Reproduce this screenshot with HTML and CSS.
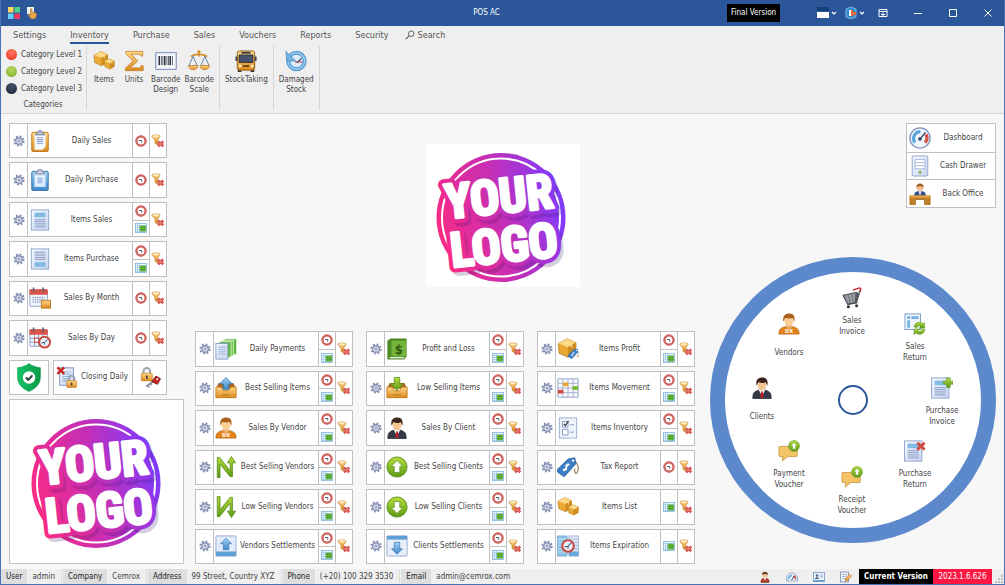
FILE: index.html
```html
<!DOCTYPE html>
<html lang="en">
<head>
<meta charset="UTF-8" />
<meta name="viewport" content="width=device-width, initial-scale=1" />
<title>POS AC</title>
<link rel="stylesheet" href="styles.css">
</head>
<body>

<!-- icon sprite -->
<svg class="sprite" aria-hidden="true">
  <defs>
    <linearGradient id="gOrange" x1="0" y1="0" x2="0" y2="1"><stop offset="0" stop-color="#ffd98a"/><stop offset="1" stop-color="#dd8a1e"/></linearGradient>
    <linearGradient id="gBlue" x1="0" y1="0" x2="0" y2="1"><stop offset="0" stop-color="#9fd3f5"/><stop offset="1" stop-color="#3f87c9"/></linearGradient>
    <linearGradient id="gGreen" x1="0" y1="0" x2="0" y2="1"><stop offset="0" stop-color="#b5dc3c"/><stop offset="1" stop-color="#5c9a16"/></linearGradient>
    <linearGradient id="gPaper" x1="0" y1="0" x2="1" y2="1"><stop offset="0" stop-color="#f4f8ff"/><stop offset="1" stop-color="#c9d6f0"/></linearGradient>
    <linearGradient id="gShield" x1="0" y1="0" x2="1" y2="0"><stop offset="0" stop-color="#17c367"/><stop offset="1" stop-color="#0b9a49"/></linearGradient>
    <linearGradient id="gLogo" gradientUnits="userSpaceOnUse" x1="10" y1="90" x2="140" y2="60"><stop offset="0" stop-color="#fb2a83"/><stop offset=".5" stop-color="#c62fb4"/><stop offset="1" stop-color="#7d3bff"/></linearGradient>
  </defs>

  <symbol id="gear" viewBox="0 0 24 24">
    <circle cx="12" cy="12" r="9.600" fill="none" stroke="#7d89ab" stroke-width="3.200" stroke-dasharray="3.800 3.740"/>
    <circle cx="12" cy="12" r="6.600" fill="#e6ebf6" stroke="#8490b3" stroke-width="2.800"/>
    <circle cx="12" cy="12" r="2.200" fill="#fff" stroke="#66739a" stroke-width="1.600"/>
  </symbol>
  <symbol id="clock" viewBox="0 0 24 24">
    <circle cx="12" cy="12" r="9.200" fill="#fff" stroke="#c8524c" stroke-width="4.400"/>
    <circle cx="12" cy="12" r="10" fill="none" stroke="#e38a84" stroke-width="1"/>
    <path d="M8 11h5.500v4.500" fill="none" stroke="#6b5a6c" stroke-width="2"/>
  </symbol>
  <symbol id="sheet" viewBox="0 0 24 20">
    <rect x="1" y="1" width="22" height="18" fill="#f2f9fe" stroke="#7fb3dc" stroke-width="1.600"/>
    <rect x="9" y="5" width="13" height="12" fill="#6cc02b"/>
    <path d="M1 5h22M1 9h22M1 13h22M1 17h22M5 1v18M9 1v18" stroke="#84b9df" stroke-width="1"/>
    <path d="M9 9h13M9 13h13M13.500 5v12M18 5v12" stroke="#3f8d15" stroke-width="1"/>
  </symbol>
  <symbol id="filter" viewBox="0 0 24 24">
    <path d="M1.500 4c0-3 14-3 14 0l-4.500 6.500v8l-4-2.500v-5.500z" fill="url(#gOrange)" stroke="#bf7b24" stroke-width="1.200"/>
    <ellipse cx="8.500" cy="4" rx="5.500" ry="1.700" fill="#fff0c8"/>
    <path d="M12 13l9 8M21 13l-9 8" stroke="#d0453f" stroke-width="4.500"/>
    <path d="M13 14l7 6M20 14l-7 6" stroke="#f0938c" stroke-width="1.500"/>
  </symbol>
  <symbol id="clip-orange" viewBox="0 0 24 24">
    <rect x="3" y="2.500" width="18" height="21" rx="1.500" fill="url(#gOrange)" stroke="#b87418"/>
    <path d="M6 4.500h12v13.500l-3 3.500h-9z" fill="#f4f7fc"/>
    <path d="M8.500 8.500h7M8.500 10.500h7M8.500 12.500h7M8.500 14.500h7" stroke="#9db2d8" stroke-width="1.300"/>
    <path d="M7 5.500c0-3 3-2 3-3.500a2 2 0 0 1 4 0c0 1.500 3 .5 3 3.500z" fill="#aab6cf" stroke="#6c7a9b" stroke-width=".8"/>
  </symbol>
  <symbol id="clip-blue" viewBox="0 0 24 24">
    <rect x="3" y="2.500" width="18" height="21" rx="1.500" fill="url(#gBlue)" stroke="#3671a8"/>
    <path d="M6 5h12v14.500H6z" fill="#dceafa"/>
    <path d="M8.500 8.500h7v6l-2 2h-5z" fill="#a5c5ea" stroke="#fff"/>
    <path d="M7 5.500c0-3 3-2 3-3.500a2 2 0 0 1 4 0c0 1.500 3 .5 3 3.500z" fill="#c2cbdc" stroke="#6c7a9b" stroke-width=".8"/>
  </symbol>
  <symbol id="doc-top" viewBox="0 0 24 24">
    <rect x="2.500" y="1" width="19" height="22" fill="url(#gPaper)" stroke="#8fa2cc"/>
    <rect x="6" y="4" width="12" height="5" fill="#7fbbe4"/>
    <path d="M6 11.500h12M6 13.500h12M6 15.500h12M6 17.500h12M6 19.500h12" stroke="#98a8d0" stroke-width="1.100"/>
  </symbol>
  <symbol id="doc-bottom" viewBox="0 0 24 24">
    <rect x="2.500" y="1" width="19" height="22" fill="url(#gPaper)" stroke="#8fa2cc"/>
    <rect x="6" y="15.500" width="12" height="5" fill="#7fbbe4"/>
    <path d="M6 4.500h12M6 6.500h12M6 8.500h12M6 10.500h12M6 12.500h12" stroke="#98a8d0" stroke-width="1.100"/>
  </symbol>
  <symbol id="calendar" viewBox="0 0 24 24">
    <rect x="1" y="3" width="19" height="18" rx="1" fill="#f2f6fd" stroke="#8b9cc6"/>
    <path d="M.5 8.500v-5q0-1 1-1h18q1 0 1 1v5z" fill="#d9554b"/>
    <path d="M5 .5v4.500M15.500 .5v4.500" stroke="#5d6273" stroke-width="1.800"/>
    <path d="M4 11.500h13M4 14h13M4 16.500h13" stroke="#8498c8" stroke-width="1.500" stroke-dasharray="1.500 .9"/>
  </symbol>
  <symbol id="cal-box" viewBox="0 0 24 24">
    <use href="#calendar" width="24" height="24"/>
    <rect x="13.500" y="14.500" width="10" height="8.500" fill="url(#gOrange)" stroke="#bd7b1c"/>
  </symbol>
  <symbol id="red-clock" viewBox="0 0 24 24">
    <circle cx="12" cy="12" r="9.500" fill="#e9f2fb" stroke="#c74a43" stroke-width="3.400"/>
    <path d="M6 13.500l6-1 5-5.500M12 12.500v4" fill="none" stroke="#44516e" stroke-width="1.700"/>
  </symbol>
  <symbol id="cal-clock" viewBox="0 0 24 24">
    <rect x="1" y="3" width="19" height="18" rx="1" fill="#f2f6fd" stroke="#8b9cc6"/>
    <path d="M1 12.500h19M1 16.500h19M6 8v13M10.500 8v13M15 8v13" stroke="#8498c8"/>
    <path d="M.5 8.500v-5q0-1 1-1h18q1 0 1 1v5z" fill="#d9554b"/>
    <path d="M5 .5v4.500M15.500 .5v4.500" stroke="#5d6273" stroke-width="1.800"/>
    <rect x="6" y="12" width="5" height="5" fill="none" stroke="#d9554b"/>
    <use href="#red-clock" x="9.500" y="9" width="15" height="15"/>
  </symbol>
  <symbol id="shield" viewBox="0 0 24 28">
    <path d="M12 .5c3 2.500 6.500 3.500 11 4v9c0 7-4.500 11-11 14-6.500-3-11-7-11-14v-9c4.500-.5 8-1.500 11-4z" fill="url(#gShield)" stroke="#0d9a4a" stroke-width=".6"/>
    <circle cx="12" cy="14" r="6" fill="#fff"/>
    <path d="M9 14l2.300 2.300 4-4.300" fill="none" stroke="#1d3b2b" stroke-width="1.800"/>
  </symbol>
  <symbol id="padlock" viewBox="0 0 24 24">
    <path d="M7 12V8a5 5 0 0 1 10 0v4" fill="none" stroke="#9aa2b1" stroke-width="3"/>
    <rect x="3.500" y="11" width="17" height="12" rx="1.500" fill="url(#gOrange)" stroke="#b87418"/>
    <path d="M12 14.500v5" stroke="#3c3c48" stroke-width="2.600"/>
  </symbol>
  <symbol id="doc-lock" viewBox="0 0 24 24">
    <rect x="4" y="2" width="15" height="19" fill="url(#gPaper)" stroke="#7693be"/>
    <path d="M7 6.500h9M7 9h9M7 11.500h9M7 14h9M7 16.500h9" stroke="#98b4dc" stroke-width="1.200"/>
    <path d="M1.500 1.500l7.500 7M9 1.500l-7.500 7" stroke="#c9221b" stroke-width="2.600"/>
    <use href="#padlock" x="9.500" y="9" width="15" height="15"/>
  </symbol>
  <symbol id="lock-key" viewBox="0 0 24 24">
    <use href="#padlock" x="0" y="0" width="17" height="17"/>
    <path d="M16 16l-8 6.500" stroke="#8c94a6" stroke-width="2.200"/>
    <path d="M9.500 21l2 2.500M12.500 19l1.500 2" stroke="#8c94a6" stroke-width="1.500"/>
    <path d="M18.500 11l5 3-3.500 6-6-3z" fill="#c52425" stroke="#851617"/>
    <circle cx="20" cy="14.500" r="1.100" fill="#fff"/>
  </symbol>
  <symbol id="pages" viewBox="0 0 24 24">
    <path d="M10.500 1h13v17h-13z" fill="#4fae34" stroke="#fff" stroke-width=".7"/>
    <path d="M7.500 2.500h13v17h-13z" fill="#7cc957" stroke="#fff" stroke-width=".7"/>
    <path d="M4.500 4h13v17h-13z" fill="#5db73e" stroke="#fff" stroke-width=".7"/>
    <rect x="1" y="6" width="13" height="17" fill="url(#gPaper)" stroke="#7f9cc6"/>
    <path d="M3.500 10h8M3.500 12.500h8M3.500 15h8M3.500 17.500h8" stroke="#9db5dc" stroke-width="1.200"/>
  </symbol>
  <symbol id="tray" viewBox="0 0 24 24">
    <path d="M4 6.500h16l3 6H1z" fill="#a96522"/>
    <path d="M1 11h6l2 4h6l2-4h6v11.500H1z" fill="url(#gOrange)" stroke="#c57c1d"/>
    <path d="M8 19.500h8" stroke="#b87418"/>
  </symbol>
  <symbol id="tray-up" viewBox="0 0 24 24">
    <use href="#tray" width="24" height="24"/>
    <path d="M12 .5l7 7h-4v6H9v-6H5z" fill="url(#gBlue)" stroke="#3671a8" stroke-width=".8"/>
  </symbol>
  <symbol id="tray-down" viewBox="0 0 24 24">
    <use href="#tray" width="24" height="24"/>
    <path d="M12 14.500l7-7h-4V.5H9v7H5z" fill="url(#gGreen)" stroke="#4f8a12" stroke-width=".8"/>
  </symbol>
  <symbol id="vendor" viewBox="0 0 24 24">
    <path d="M1 23c0-5 2-7 7-8h8c5 1 7 3 7 8z" fill="#e58216" stroke="#b9620c" stroke-width=".8"/>
    <path d="M9 12h6v4l-3 2-3-2z" fill="#e3ab6c"/>
    <ellipse cx="12" cy="8.500" rx="5" ry="6" fill="#f7cf97"/>
    <path d="M6 9.500C4.500 3 8 .5 12.500 .5S19 4 17.800 9.500l-1.600-4c-3 .8-6 .5-8.400 0z" fill="#a9611d"/>
  </symbol>
  <symbol id="client" viewBox="0 0 24 24">
    <path d="M2 23.500c0-5.500 1-7.500 6-9h8c5 1.500 6 3.500 6 9z" fill="#363a48" stroke="#22242e" stroke-width=".8"/>
    <path d="M8.500 14l3.500 7 3.500-7z" fill="#fff"/>
    <path d="M11.200 15.500h1.600l1 7h-3.600z" fill="#c32026"/>
    <ellipse cx="12" cy="8.500" rx="4.800" ry="6" fill="#f3c692"/>
    <path d="M6.200 9.500C4.500 3 8 .5 12.500 .5S19 4 17.800 9.500l-1.800-4c-1.500 1.500-5 1.500-8 0z" fill="#3a241b"/>
  </symbol>
  <symbol id="n-up" viewBox="0 0 24 24">
    <path d="M2.500 23.500V1.500h2.500L16.500 16V7.500h-3l4.500-7 4.500 7H19V22.500h-2.500L5.500 9v14.500z" fill="url(#gGreen)" stroke="#4d8612" stroke-width=".8"/>
  </symbol>
  <symbol id="n-down" viewBox="0 0 24 24">
    <path d="M2.500 .5v22h2.500L16.500 8v8.500h-3l4.500 7 4.500-7H19V1.500h-2.500L5.500 15V.5z" fill="url(#gGreen)" stroke="#4d8612" stroke-width=".8"/>
  </symbol>
  <symbol id="settle-up" viewBox="0 0 24 24">
    <rect x="1" y="1" width="22" height="22" rx="1" fill="#e1eaf9" stroke="#93a7d0"/>
    <path d="M1 18h22v5H1z" fill="#5e9fd8"/>
    <path d="M12 3.500l6 6h-3v6.500H9V9.500H6z" fill="url(#gBlue)" stroke="#3b78b5" stroke-width=".8"/>
  </symbol>
  <symbol id="settle-down" viewBox="0 0 24 24">
    <rect x="1" y="1" width="22" height="22" rx="1" fill="#e9effa" stroke="#93a7d0"/>
    <path d="M1 1h22v4H1z" fill="#5e9fd8"/>
    <path d="M12 21l6-6h-3V8H9v7H6z" fill="url(#gBlue)" stroke="#3b78b5" stroke-width=".8"/>
  </symbol>
  <symbol id="book" viewBox="0 0 24 24">
    <path d="M2 3l3-2h17v19l-2 3H2z" fill="#4f8e26" stroke="#3d7419" stroke-width=".8"/>
    <path d="M6 3h16v17H6z" fill="#74b43c"/>
    <path d="M4 21.500h16" stroke="#e8efdc" stroke-width="1.500"/>
  </symbol>
  <symbol id="circle-up" viewBox="0 0 24 24">
    <circle cx="12" cy="12" r="11" fill="url(#gGreen)" stroke="#568f17"/>
    <path d="M12 5l6.500 6.500H15V18H9v-6.500H5.500z" fill="#fff" stroke="#5c9420" stroke-width=".8"/>
  </symbol>
  <symbol id="circle-down" viewBox="0 0 24 24">
    <circle cx="12" cy="12" r="11" fill="url(#gGreen)" stroke="#568f17"/>
    <path d="M12 19l6.500-6.500H15V6H9v6.500H5.500z" fill="#fff" stroke="#5c9420" stroke-width=".8"/>
  </symbol>
  <symbol id="box" viewBox="0 0 24 24">
    <path d="M1.500 6.500L12 1l10.500 4.500v12L13 23 2.500 18z" fill="#eaa834" stroke="#a66d14" stroke-width=".8"/>
    <path d="M1.500 6.500L12 1l10.500 4.500L13 11z" fill="#fbd67e"/>
    <path d="M13 11l9.500-5.500v12L13 23z" fill="#cf8b1e"/>
    <path d="M7 4l10.500 4.500v3.500" fill="none" stroke="#fbe7b4" stroke-width="1.200"/>
  </symbol>
  <symbol id="tag" viewBox="0 0 24 24">
    <path d="M18 5c5 2 6 8 4.500 12s-4 1-3-3" fill="none" stroke="#a88763" stroke-width="1.400"/>
    <path d="M.5 14.500L12.500 3l7-1 1 6.500L9 21.500q-1.500 1.500-3 0L.5 17.500q-1-1.500 0-3z" fill="#3d7ec6" stroke="#235892" stroke-width=".8"/>
    <circle cx="17.500" cy="5" r="1.300" fill="#fff"/>
    <path d="M13.500 10c-2-3-5 0-3.500 2s0 5-3.500 2.500M13 8.500l-6 8" fill="none" stroke="#fff" stroke-width="1.300"/>
  </symbol>
  <symbol id="box-tag" viewBox="0 0 24 24">
    <use href="#box" width="22" height="22"/>
    <use href="#tag" x="12" y="11" width="12.500" height="12.500"/>
  </symbol>
  <symbol id="boxes" viewBox="0 0 24 24">
    <use href="#box" x="0" y="1" width="17" height="17"/>
    <use href="#box" x="11.500" y="9" width="12.500" height="12.500"/>
  </symbol>
  <symbol id="movement" viewBox="0 0 24 24">
    <rect x="1" y="2" width="22" height="20" fill="#f7f9fe" stroke="#8d9cc5"/>
    <path d="M1 7h22M1 12h22M1 17h22M6.500 2v20M12 2v20M17.500 2v20" stroke="#98a6cb" stroke-width=".9"/>
    <path d="M6.500 6h6v4h-6z" fill="#eda72e"/><path d="M17 10h6v4h-6z" fill="#76b82d"/><path d="M1 14h6v4H1z" fill="#d9473f"/>
  </symbol>
  <symbol id="checklist" viewBox="0 0 24 24">
    <rect x="2.500" y="1" width="19" height="22" fill="#eef3fc" stroke="#9aaad0"/>
    <path d="M6 5h6v6H6zM6 13.500h6v6H6z" fill="#fff" stroke="#8194c2"/>
    <path d="M7.500 7.500L9 9.500l3.500-5" fill="none" stroke="#343a4c" stroke-width="1.400"/>
    <path d="M14.500 8.500h4M14.500 16.500h4" stroke="#8194c2"/>
  </symbol>
  <symbol id="expire" viewBox="0 0 24 24">
    <path d="M.5 1h10.500v22H.5z" fill="#8cc4e6" stroke="#6aa5cf" stroke-width=".8"/><path d="M13 1h10.500v22H13z" fill="#d9e4f5" stroke="#8ea6d2" stroke-width=".8"/>
    <path d="M1 4.500h9.500M1 8h9.500M1 11.500h9.500M1 15h9.500M1 18.500h9.500" stroke="#d4ebf8" stroke-width=".8"/>
    <path d="M13.500 4.500h9.500M13.500 8h9.500M13.500 11.500h9.500M13.500 15h9.500" stroke="#9db2d9" stroke-width=".8"/>
    <path d="M13 18h10.500v5H13z" fill="#6ba9d9"/>
    <use href="#red-clock" x="4" y="4" width="16" height="16"/>
  </symbol>
  <symbol id="cart" viewBox="0 0 24 24">
    <path d="M2 9l14-3 4 1-3 10-10 2z" fill="#85888e" stroke="#46494f"/>
    <path d="M6 9l3 9M10 8l2 9.500M14 7.500l1 9" stroke="#b9bcc1" stroke-width=".7"/>
    <path d="M16 6l4 1-3 10-2-.5z" fill="#55585e"/>
    <path d="M19 8l2-5" stroke="#777" stroke-width="1.300"/>
    <path d="M13 3.500l7-2.500 1.500 .5-.5 4" fill="none" stroke="#c9252b" stroke-width="1.500"/>
    <path d="M7 19l11-2" stroke="#46494f" stroke-width="1.500"/>
    <circle cx="8" cy="21.500" r="1.700" fill="#333"/><circle cx="17" cy="20.500" r="1.700" fill="#333"/>
  </symbol>
  <symbol id="sales-return" viewBox="0 0 24 24">
    <rect x="1" y="1" width="17" height="17" fill="#edf4fc" stroke="#7d9bc9"/>
    <path d="M3.500 3.500h3v3h-3zM8 3.500h8v3H8zM3.500 8h3v8h-3z" fill="#72b1e0"/>
    <path d="M11 15c1-6 8-6 10-3l1.500-1.500v6h-6l2-2c-2-1.500-4-.5-4.500 1.500z" fill="url(#gGreen)" stroke="#568f17" stroke-width=".6"/>
    <path d="M23 18c-1 5.500-7 6.500-10 3.500L11 23.500v-6h6l-2 2c2 1.500 4 .5 4.500-1.500z" fill="url(#gGreen)" stroke="#568f17" stroke-width=".6"/>
  </symbol>
  <symbol id="doc-plus" viewBox="0 0 24 24">
    <use href="#doc-top" x="-2" width="24" height="24"/>
    <path d="M17 1h4v3.500h3v3.500h-3v3.500h-4V8h-3.500V4.500H17z" fill="url(#gGreen)" stroke="#568f17" stroke-width=".6"/>
  </symbol>
  <symbol id="doc-x" viewBox="0 0 24 24">
    <use href="#doc-top" x="-2" width="24" height="24"/>
    <path d="M14.500 3l8 7.500M22.500 3l-8 7.500" stroke="#d24b42" stroke-width="3.200"/>
  </symbol>
  <symbol id="voucher" viewBox="0 0 24 24">
    <path d="M2 7h18q1 0 1 1v9q0 1-1 1h-9l-6.500 5 1-5H2q-1 0-1-1V8q0-1 1-1z" fill="#f4c566" stroke="#c48b35" stroke-width=".8"/>
    <use href="#circle-up" x="11" y="0" width="13" height="13"/>
  </symbol>
  <symbol id="gauge" viewBox="0 0 24 24">
    <circle cx="12" cy="12" r="11" fill="#f3f7fd" stroke="#7f93bf" stroke-width="1.500"/>
    <path d="M6.500 17A7.500 7.500 0 0 1 12.500 5" fill="none" stroke="#5aa5dd" stroke-width="3.500"/>
    <path d="M18.500 8A7.500 7.500 0 0 1 17.500 17" fill="none" stroke="#d65047" stroke-width="3.500"/>
    <path d="M12 13l6-7" stroke="#2f3f5e" stroke-width="1.500"/><circle cx="12" cy="13" r="2" fill="#3b4d70"/>
  </symbol>
  <symbol id="server" viewBox="0 0 24 24">
    <rect x="3.500" y="1" width="17" height="22" rx="1.500" fill="url(#gPaper)" stroke="#8fa2cc"/>
    <path d="M6.500 5h11v10h-11zM6.500 8.300h11M6.500 11.600h11" fill="#fff" stroke="#a3b2d5"/>
    <circle cx="12" cy="19" r="1.500" fill="#6db52c"/>
  </symbol>
  <symbol id="desk" viewBox="0 0 24 24">
    <path d="M5.500 15c0-5 2-6 5-6h3c3 0 5 1 5 6z" fill="#33518e"/>
    <path d="M10.500 9l1.500 5 1.500-5z" fill="#fff"/>
    <circle cx="12" cy="5" r="3.800" fill="#f0c08a"/><path d="M8 5c0-6 8-6 8 0-2-2-6-2-8 0z" fill="#9b5f24"/>
    <path d="M1 14h22v9.500h-6V18H7v5.500H1z" fill="#c17e22" stroke="#8b5410" stroke-width=".7"/>
    <path d="M.5 13.500h23v2.500H.5z" fill="#e2a74b"/>
  </symbol>
  <symbol id="sigma" viewBox="0 0 24 24">
    <path d="M3 1.500h18.500v5h-2l-1-2H9l7 7.500-8 7.500h11l1-2.500h2V22.500H2.500v-2.500l8.500-8-8-8z" fill="url(#gOrange)" stroke="#c27a1e" stroke-width=".8"/>
  </symbol>
  <symbol id="barcode" viewBox="0 0 26 24">
    <rect x=".8" y="2" width="24.400" height="20" rx="1" fill="#e4ebf7" stroke="#8797bd" stroke-width="1.300"/>
    <rect x="3" y="4.500" width="20" height="15" fill="#fff"/>
    <path d="M5 6v11M11.500 6v11M18 6v11" stroke="#2c3040" stroke-width="1.800"/>
    <path d="M7.500 6v11M9.300 6v11M14 6v11M16 6v11M20.500 6v11" stroke="#2c3040" stroke-width=".9"/>
  </symbol>
  <symbol id="scale" viewBox="0 0 24 24">
    <path d="M12 3v4" stroke="#c8822a" stroke-width="1.800"/><circle cx="12" cy="2" r="1.800" fill="#d78f2b"/>
    <path d="M3 7c5-3 13-3 18 0" fill="none" stroke="#d78f2b" stroke-width="2"/>
    <path d="M5.500 7L1 17h9zM18.500 7l-4.500 10h9z" fill="none" stroke="#5f7aa8"/>
    <path d="M.5 17h10.500c0 6-10.500 6-10.500 0zM13 17h10.500c0 6-10.500 6-10.500 0z" fill="url(#gOrange)" stroke="#b9741c" stroke-width=".7"/>
  </symbol>
  <symbol id="bus" viewBox="0 0 24 24">
    <path d="M3 21h4v3H3zM17 21h4v3h-4z" fill="#333"/>
    <rect x="2.500" y="1" width="19" height="21" rx="2.500" fill="url(#gOrange)" stroke="#8d5b15"/>
    <path d="M7 2h10v2H7z" fill="#333a48"/>
    <path d="M4.500 5.500h15v8h-15z" fill="#48546e" stroke="#262b38"/>
    <path d="M.5 7h2v5h-2zM21.500 7h2v5h-2z" fill="#444"/>
    <circle cx="5.500" cy="17.500" r="1.500" fill="#fff6d8"/><circle cx="18.500" cy="17.500" r="1.500" fill="#fff6d8"/>
    <path d="M8.500 17.500h7" stroke="#6a4514" stroke-width="2"/>
  </symbol>
  <symbol id="history" viewBox="0 0 24 24">
    <circle cx="12.500" cy="12" r="9" fill="#dcebf8" stroke="#5c9fd6" stroke-width="4.500"/>
    <circle cx="12.500" cy="12" r="9" fill="none" stroke="#9accf0" stroke-width="1.500"/>
    <path d="M1 1.500l1 10.500h9.500z" fill="#74b5e4" stroke="#3b7db9" stroke-width=".7"/>
    <path d="M11 13h8" stroke="#c95048" stroke-width="1.300"/><path d="M13 14l5-5" stroke="#44516e" stroke-width="1.300"/>
  </symbol>
  <symbol id="search" viewBox="0 0 12 12">
    <circle cx="7.500" cy="4.500" r="3.300" fill="none" stroke="#555" stroke-width="1.100"/><path d="M5 7L1 11" stroke="#555" stroke-width="1.300"/>
  </symbol>
  <symbol id="app" viewBox="0 0 12 12">
    <path d="M0 0h5.500v5.500H0z" fill="#ffd75e"/><path d="M6.500 0H12v5.500H6.500z" fill="#4cd08a"/>
    <path d="M0 6.500h5.500V12H0z" fill="#66d0f5"/><path d="M6.500 6.500H12V12H6.500z" fill="#f23d5c"/>
  </symbol>
  <symbol id="touch" viewBox="0 0 12 12">
    <path d="M1 0h7v7H1z" fill="#f2f5fa"/>
    <path d="M4.500 2q1-.8 1.500 0v3l4 1q1 .5.500 3L9 12H5L2 7.500l1-.7 1.500 1z" fill="#e8a54c" stroke="#9c611d" stroke-width=".5"/>
  </symbol>
  <symbol id="chevron" viewBox="0 0 6 6"><path d="M1 2l2 2 2-2" fill="none" stroke="#fff" stroke-width="1.200"/></symbol>
  <symbol id="theme" viewBox="0 0 12 12"><path d="M0 0h12v4H0z" fill="#14407c"/><path d="M0 5h12v6H0z" fill="#fff"/></symbol>
  <symbol id="palette" viewBox="0 0 12 12">
    <path d="M1 2l5-2 5 2v8l-5 2-5-2z" fill="#2a8ad0" stroke="#bfe2fa" stroke-width=".6"/><path d="M4 3h2v6H4z" fill="#fff"/>
    <path d="M6 3h2v2h3v3H8v1.500H6z" fill="#e8643b"/>
  </symbol>
  <symbol id="ribbon-toggle" viewBox="0 0 10 10">
    <path d="M1 1.500h8v7H1zM1 3.500h8M5 8V4.500M3 6.500h4" fill="none" stroke="#fff"/>
  </symbol>
  <symbol id="card" viewBox="0 0 24 24">
    <rect x="1" y="3" width="22" height="18" fill="#eaf2fc" stroke="#6f8dc0" stroke-width="1.500"/>
    <circle cx="8" cy="9" r="2.500" fill="#52658e"/><path d="M4 16c0-5 8-5 8 0z" fill="#52658e"/>
    <path d="M14 8h6M14 11.500h6" stroke="#7d9bc9" stroke-width="1.500"/><path d="M1 18h22v3H1z" fill="#5e9fd8"/>
  </symbol>
  <symbol id="half-gauge" viewBox="0 0 24 24">
    <path d="M1 20v-5a11 11 0 0 1 22 0v5z" fill="#eef4fc" stroke="#7f93bf" stroke-width="1.500"/>
    <path d="M5 17a7 7 0 0 1 7-8" fill="none" stroke="#5aa5dd" stroke-width="3"/><path d="M15 9.500a7 7 0 0 1 4 7.500" fill="none" stroke="#d65047" stroke-width="3"/>
    <path d="M11 18l6-8" stroke="#2f3f5e" stroke-width="2"/>
  </symbol>
  <symbol id="edit" viewBox="0 0 24 24">
    <rect x="1" y="2" width="16" height="20" fill="#edf3fc" stroke="#6f83ab" stroke-width="1.500"/>
    <path d="M4 7h10M4 11h7M4 15h5" stroke="#8ea1c6" stroke-width="1.500"/>
    <path d="M10 21l1-6 8-9 4 4-8 9z" fill="url(#gOrange)" stroke="#9a6418"/>
  </symbol>
  <symbol id="admin" viewBox="0 0 24 24">
    <path d="M3 23c0-7 3-9 9-9s9 2 9 9z" fill="#b63a2d"/><path d="M10 14l2 6 2-6z" fill="#fff"/>
    <circle cx="12" cy="8" r="5" fill="#f0c390"/><path d="M6 8C5-1 19-1 18 8c-3-3-9-3-12 0z" fill="#6b3f20"/>
    <path d="M4 21h16v2.500H4z" fill="#7a4b22"/>
  </symbol>
</svg>

<header class="titlebar">
  <div class="quick">
    <svg class="ico-12"><use href="#app"/></svg>
    <button aria-label="Touch mode"><svg class="ico-12"><use href="#touch"/></svg></button>
  </div>
  <h1>POS AC</h1>
  <span class="final">Final Version</span>
  <div class="window-tools">
    <button class="drop" aria-label="Theme"><svg class="ico-12"><use href="#theme"/></svg><svg class="ico-6"><use href="#chevron"/></svg></button>
    <button class="drop" aria-label="Palette"><svg class="ico-12"><use href="#palette"/></svg><svg class="ico-6"><use href="#chevron"/></svg></button>
  </div>
  <div class="window-buttons">
    <button aria-label="Ribbon display"><svg class="ico-10"><use href="#ribbon-toggle"/></svg></button>
    <button aria-label="Minimize"><svg class="ico-10" viewBox="0 0 10 10"><path d="M1 5.500h8" stroke="#fff"/></svg></button>
    <button aria-label="Maximize"><svg class="ico-10" viewBox="0 0 10 10"><path d="M1.500 1.500h7v7h-7z" fill="none" stroke="#fff"/></svg></button>
    <button aria-label="Close"><svg class="ico-10" viewBox="0 0 10 10"><path d="M1.500 1.500l7 7M8.500 1.500l-7 7" stroke="#fff"/></svg></button>
  </div>
</header>

<nav class="tabs">
  <a href="#">Settings</a>
  <a href="#" class="active">Inventory</a>
  <a href="#">Purchase</a>
  <a href="#">Sales</a>
  <a href="#">Vouchers</a>
  <a href="#">Reports</a>
  <a href="#">Security</a>
  <a href="#" class="search"><svg class="ico-10"><use href="#search"/></svg>Search</a>
</nav>

<section class="ribbon">
  <div class="group categories">
    <button><span class="dot red"></span>Category Level 1</button>
    <button><span class="dot green"></span>Category Level 2</button>
    <button><span class="dot dark"></span>Category Level 3</button>
    <span class="group-name">Categories</span>
  </div>
  <div class="group items">
    <button><svg class="ico-22"><use href="#boxes"/></svg>Items</button>
    <button><svg class="ico-22"><use href="#sigma"/></svg>Units</button>
    <button><svg class="ico-22"><use href="#barcode"/></svg>Barcode<br>Design</button>
    <button><svg class="ico-22"><use href="#scale"/></svg>Barcode<br>Scale</button>
  </div>
  <div class="group">
    <button><svg class="ico-22"><use href="#bus"/></svg>StockTaking</button>
  </div>
  <div class="group">
    <button><svg class="ico-22"><use href="#history"/></svg>Damaged<br>Stock</button>
  </div>
</section>

<main>
  <aside class="left">
    <div class="tiles side" id="sideTiles"></div>
    <div class="logo-box">
      <svg class="logo" viewBox="0 0 154 143" role="img" aria-label="Your logo">
        <circle cx="75" cy="73.500" r="64.500" fill="url(#gLogo)"/>
        <circle cx="75" cy="73.500" r="59" fill="none" stroke="#fff" stroke-width="2"/>
        <g class="logo-shadow"><use href="#sideLogoText" x="3" y="4"/></g>
        <g class="logo-outline"><use href="#sideLogoText"/></g>
        <g class="logo-letters"><g id="sideLogoText" transform="rotate(-6 75 73)"><text x="75" y="69">YOUR</text><text x="75" y="118">LOGO</text></g></g>
      </svg>
    </div>
  </aside>

  <section class="center">
    <div class="brand">
      <svg class="logo" viewBox="0 0 154 143" role="img" aria-label="Your logo">
        <circle cx="75" cy="73.500" r="64.500" fill="url(#gLogo)"/>
        <circle cx="75" cy="73.500" r="59" fill="none" stroke="#fff" stroke-width="2"/>
        <g class="logo-shadow"><use href="#brandLogoText" x="3" y="4"/></g>
        <g class="logo-outline"><use href="#brandLogoText"/></g>
        <g class="logo-letters"><g id="brandLogoText" transform="rotate(-6 75 73)"><text x="75" y="69">YOUR</text><text x="75" y="118">LOGO</text></g></g>
      </svg>
    </div>
    <div class="reports">
      <div class="tiles" id="vendorTiles"></div>
      <div class="tiles" id="clientTiles"></div>
      <div class="tiles" id="itemTiles"></div>
    </div>
  </section>

  <aside class="right">
    <div class="shortcuts">
      <button><svg class="ico-22"><use href="#gauge"/></svg><span>Dashboard</span></button>
      <button><svg class="ico-22"><use href="#server"/></svg><span>Cash Drawer</span></button>
      <button><svg class="ico-22"><use href="#desk"/></svg><span>Back Office</span></button>
    </div>
    <div class="wheel">
      <button class="hub" aria-label="Menu"></button>
      <button class="spoke s1"><svg class="ico-22"><use href="#cart"/></svg><span>Sales<br>Invoice</span></button>
      <button class="spoke s2"><svg class="ico-22"><use href="#sales-return"/></svg><span>Sales<br>Return</span></button>
      <button class="spoke s3"><svg class="ico-22"><use href="#doc-plus"/></svg><span>Purchase<br>Invoice</span></button>
      <button class="spoke s4"><svg class="ico-22"><use href="#doc-x"/></svg><span>Purchase<br>Return</span></button>
      <button class="spoke s5"><svg class="ico-22"><use href="#voucher"/></svg><span>Receipt<br>Voucher</span></button>
      <button class="spoke s6"><svg class="ico-22"><use href="#voucher"/></svg><span>Payment<br>Voucher</span></button>
      <button class="spoke s7"><svg class="ico-22"><use href="#client"/></svg><span>Clients</span></button>
      <button class="spoke s8"><svg class="ico-22" viewBox="0 0 24 24"><use href="#vendor"/><text x="12" y="22" class="vendor-text">DX</text></svg><span>Vendors</span></button>
    </div>
  </aside>
</main>

<footer class="status">
  <dl>
    <dt>User</dt><dd>admin</dd>
    <dt>Company</dt><dd>Cemrox</dd>
    <dt>Address</dt><dd>99 Street, Country XYZ</dd>
    <dt>Phone</dt><dd>(+20) 100 329 3530</dd>
    <dt>Email</dt><dd>admin@cemrox.com</dd>
  </dl>
  <div class="status-icons">
    <button aria-label="User"><svg class="ico-12"><use href="#admin"/></svg></button>
    <button aria-label="Dashboard"><svg class="ico-12"><use href="#half-gauge"/></svg></button>
    <button aria-label="Card"><svg class="ico-12"><use href="#card"/></svg></button>
    <button aria-label="Edit"><svg class="ico-12"><use href="#edit"/></svg></button>
  </div>
  <strong class="version-label">Current Version</strong>
  <span class="version">2023.1.6.626</span>
  <svg class="grip" viewBox="0 0 10 10"><path d="M7 1h2v2H7zM4 4h2v2H4zM7 4h2v2H7zM1 7h2v2H1zM4 7h2v2H4zM7 7h2v2H7z" fill="#bbb"/></svg>
</footer>

<script src="script.js"></script>
</body>
</html>
```
FILE: styles.css
```css
* {
  box-sizing: border-box;
}
body {
  font-family: "DejaVu Sans Condensed", Tahoma, "Noto Sans", sans-serif;
  font-size: 8px;
  line-height: 10px;
  color: #444;
  background: #f7f7f7;
  margin: 0;
  min-height: 100vh;
  display: flex;
  flex-direction: column;
  border: solid #4a72b4;
  border-width: 0 1px 1px;
}
button {
  font: inherit;
  color: inherit;
  background: none;
  border: none;
  padding: 0;
  margin: 0;
  cursor: pointer;
}
svg {
  display: block;
  flex: none;
}
.sprite {
  position: absolute;
  width: 0;
  height: 0;
}
.ico-6 { width: 6px; height: 6px; }
.ico-10 { width: 10px; height: 10px; }
.ico-12 { width: 12px; height: 12px; }
.ico-14 { width: 14px; height: 14px; }
.ico-22 { width: 22px; height: 22px; }
.vendor-text {
  font-size: 6px;
  font-weight: bold;
  fill: #fff;
  text-anchor: middle;
}
.book-text {
  font-size: 14px;
  font-weight: bold;
  fill: #2f5c12;
  text-anchor: middle;
}

/* title bar */
.titlebar {
  display: flex;
  align-items: center;
  height: 26px;
  margin: 0 -1px;
  background: #2b579a;
  color: #fff;
}
.quick {
  display: flex;
  gap: 6px;
  width: 246px;
  padding-left: 8px;
}
.titlebar h1 {
  flex: 1;
  margin: 0;
  font-size: 8px;
  font-weight: normal;
  text-align: center;
}
.final {
  background: #000;
  padding: 4px 0;
  width: 53px;
  text-align: center;
}
.window-tools {
  display: flex;
  gap: 8px;
  padding-left: 37px;
}
.drop {
  display: flex;
  align-items: center;
  gap: 2px;
}
.window-buttons {
  display: flex;
}
.window-buttons button {
  display: flex;
  justify-content: center;
  width: 35px;
}

/* ribbon */
.tabs {
  display: flex;
  padding: 4px 0 0 12px;
  gap: 24px;
  background: #efefef;
  font-size: 9px;
  line-height: 11px;
}
.tabs a {
  color: #555;
  text-decoration: none;
  border-bottom: 2px solid transparent;
  padding-bottom: 1px;
}
.tabs .active {
  border-color: #2b579a;
}
.tabs .search {
  display: flex;
  gap: 3px;
  margin-left: -8px;
}
.ribbon {
  display: flex;
  padding: 2px 0 3px;
  background: #efefef;
  border-bottom: 1px solid #d6d6d6;
}
.group {
  display: flex;
  padding: 4px 5px 0;
  border-right: 1px solid #d6d6d6;
}
.group button {
  display: flex;
  flex-direction: column;
  align-items: center;
  line-height: 10px;
}
.group .ico-22 {
  margin-bottom: 3px;
}
.group.items {
  gap: 4px;
  padding-left: 4px;
}
.items button {
  min-width: 26px;
}
.group.categories {
  flex-direction: column;
  padding: 0 4px 0 5px;
}
.categories button {
  flex-direction: row;
  gap: 4px;
  height: 17px;
}
.dot {
  width: 11px;
  height: 11px;
  border-radius: 50%;
}
.red { background: radial-gradient(circle at 50% 30%, #ff7a62, #ee2a1e); }
.green { background: radial-gradient(circle at 50% 30%, #b4d95e, #7fae2c); }
.dark { background: radial-gradient(circle at 50% 30%, #44506a, #1c2535); }
.group-name {
  width: 74px;
  text-align: center;
  margin-top: 3px;
}

/* workspace */
main {
  flex: 1;
  display: flex;
  gap: 11px;
  padding: 9px 8px 5px;
}
.left,
.center,
.right {
  display: flex;
  flex-direction: column;
}
.left {
  width: 175px;
  gap: 4px;
}
.logo-box {
  flex: 1;
  display: flex;
  align-items: center;
  justify-content: center;
  padding-left: 3px;
  background: #fff;
  border: 1px solid #c4c4c4;
}
.logo {
  width: 154px;
  height: 143px;
}
.tiles {
  display: grid;
  grid-auto-rows: 1fr;
  gap: 4px;
  width: 158px;
  min-height: 233px;
}
.tiles.side {
  min-height: 272px;
}
.tile {
  display: grid;
  grid-template-columns: 17px 1fr 17px 17px;
  background: #fff;
  border: 1px solid #c0c0c0;
}
.tile > * + * {
  border-left: 1px solid #c0c0c0;
}
.tile button {
  display: flex;
  align-items: center;
  justify-content: center;
}
.tile .open {
  padding-left: 1px;
}
.open span {
  flex: 1;
}
.stack {
  display: grid;
  grid-auto-rows: 1fr;
}
.stack button + button {
  border-top: 1px solid #c0c0c0;
}
.closing {
  display: grid;
  grid-template-columns: 40px 1fr;
  gap: 4px;
}
.closing > div {
  display: grid;
  grid-template-columns: 80px 1fr;
}
.closing button {
  display: flex;
  align-items: center;
  justify-content: center;
  background: #fff;
  border: 1px solid #c0c0c0;
}
.closing div button + button {
  border-left: none;
}
.closing .open {
  padding: 0 1px 0 2px;
}
.shield {
  width: 26px;
  height: 29px;
}

.center {
  justify-content: space-between;
}
.brand {
  margin: 21px 0 0 231px;
  width: 154px;
  background: #fff;
}
.reports {
  display: flex;
  gap: 13px;
}

.right {
  justify-content: space-between;
  align-items: flex-end;
  margin-left: auto;
  padding-bottom: 21px;
}
.shortcuts {
  display: grid;
  grid-auto-rows: 1fr;
  width: 90px;
  height: 85px;
  background: #fff;
  border: 1px solid #c0c0c0;
}
.shortcuts button {
  display: flex;
  align-items: center;
  padding-left: 2px;
}
.shortcuts button + button {
  border-top: 1px solid #c0c0c0;
}
.shortcuts span {
  flex: 1;
}
.wheel {
  position: relative;
  width: 286px;
  height: 286px;
  border: 15px solid #5c88cc;
  border-radius: 50%;
  background: #fff;
}
.hub {
  position: absolute;
  left: 113px;
  top: 113px;
  width: 30px;
  height: 30px;
  border: 2px solid #2b579a;
  border-radius: 50%;
}
.spoke {
  position: absolute;
  display: flex;
  flex-direction: column;
  align-items: center;
  gap: 6px;
  width: 60px;
}
.spoke span {
  display: flex;
  align-items: center;
  min-height: 22px;
  line-height: 11px;
}
.s1 { left: 97px; top: 15px; }
.s2 { left: 160px; top: 41px; }
.s3 { left: 187px; top: 105px; }
.s4 { left: 160px; top: 168px; }
.s5 { left: 97px; top: 194px; }
.s6 { left: 34px; top: 168px; }
.s7 { left: 7px; top: 105px; }
.s8 { left: 34px; top: 41px; }

/* status bar */
.status {
  display: flex;
  align-items: stretch;
  height: 15px;
  line-height: 15px;
  background: #efefef;
}
.status dl {
  display: flex;
  flex: 1;
  margin: 0;
}
.status dt {
  background: #dedede;
  color: #222;
  padding: 0 5px;
}
.status dd {
  margin: 0 1px 0 0;
  padding: 0 6px 0 5px;
  border-right: 1px solid #dedede;
}
.status dd:last-child {
  border: none;
}
.status-icons {
  display: flex;
  align-items: center;
}
.status-icons button {
  display: flex;
  justify-content: center;
  width: 27px;
}
.version-label,
.version {
  background: #000;
  color: #fff;
  text-align: center;
  width: 74px;
}
.version {
  background: #ff1744;
  width: 59px;
}
.grip {
  width: 10px;
  height: 10px;
  margin-left: 2px;
  align-self: flex-end;
}

/* logo lettering */
.logo-shadow,
.logo-outline,
.logo-letters {
  font-family: "Liberation Sans Narrow", "Roboto Condensed", "DejaVu Sans Condensed", sans-serif;
  font-size: 48px;
  line-height: 48px;
  font-weight: bold;
  text-anchor: middle;
  stroke-linejoin: round;
}
.logo-shadow {
  fill: #3a1060;
  stroke: #3a1060;
  stroke-width: 10px;
  opacity: .2;
}
.logo-outline {
  fill: url(#gLogo);
  stroke: url(#gLogo);
  stroke-width: 11px;
}
.logo-letters {
  fill: #fff;
  stroke: #fff;
  stroke-width: 3px;
}
```
FILE: script.js
```js
// c = clock button, s = sheet button
const tiles = {
  sideTiles: [
    ['clip-orange', 'Daily Sales', 'c'],
    ['clip-blue', 'Daily Purchase', 'c'],
    ['doc-top', 'Items Sales', 'cs'],
    ['doc-bottom', 'Items Purchase', 'cs'],
    ['cal-box', 'Sales By Month', 'c'],
    ['cal-clock', 'Sales By Day', 'c']
  ],
  vendorTiles: [
    ['pages', 'Daily Payments', 'cs'],
    ['tray-up', 'Best Selling Items', 'cs'],
    ['vendor', 'Sales By Vendor', 'cs'],
    ['n-up', 'Best Selling Vendors', 'cs'],
    ['n-down', 'Low Selling Vendors', 'cs'],
    ['settle-up', 'Vendors Settlements', 'cs']
  ],
  clientTiles: [
    ['book', 'Profit and Loss', 'cs'],
    ['tray-down', 'Low Selling Items', 'cs'],
    ['client', 'Sales By Client', 'cs'],
    ['circle-up', 'Best Selling Clients', 'cs'],
    ['circle-down', 'Low Selling Clients', 'cs'],
    ['settle-down', 'Clients Settlements', 'cs']
  ],
  itemTiles: [
    ['box-tag', 'Items Profit', 'cs'],
    ['movement', 'Items Movement', 'cs'],
    ['checklist', 'Items Inventory', 'cs'],
    ['tag', 'Tax Report', 'c'],
    ['boxes', 'Items List', 's'],
    ['expire', 'Items Expiration', 's']
  ]
};

// lettering that sits on top of an icon
const marks = {
  vendor: '<text x="12" y="22" class="vendor-text">DX</text>',
  book: '<text x="14" y="17" class="book-text">$</text>'
};

function icon(name, size) {
  if (marks[name]) {
    return `<svg class="ico-${size}" viewBox="0 0 24 24"><use href="#${name}"/>${marks[name]}</svg>`;
  }
  return `<svg class="ico-${size}"><use href="#${name}"/></svg>`;
}

function tile([name, label, actions]) {
  const stack = [...actions].map(a => a === 'c'
    ? `<button aria-label="${label} by date">${icon('clock', 12)}</button>`
    : `<button aria-label="${label} table">${icon('sheet', 12)}</button>`).join('');
  return `<div class="tile">
    <button aria-label="${label} settings">${icon('gear', 12)}</button>
    <button class="open">${icon(name, 22)}<span>${label}</span></button>
    <div class="stack">${stack}</div>
    <button aria-label="Clear ${label} filter">${icon('filter', 14)}</button>
  </div>`;
}

for (const id in tiles) {
  document.getElementById(id).innerHTML = tiles[id].map(tile).join('');
}

document.getElementById('sideTiles').insertAdjacentHTML('beforeend', `<div class="closing">
  <button aria-label="Protection"><svg class="shield"><use href="#shield"/></svg></button>
  <div>
    <button class="open">${icon('doc-lock', 22)}<span>Closing Daily</span></button>
    <button aria-label="Unlock">${icon('lock-key', 22)}</button>
  </div>
</div>`);
```
